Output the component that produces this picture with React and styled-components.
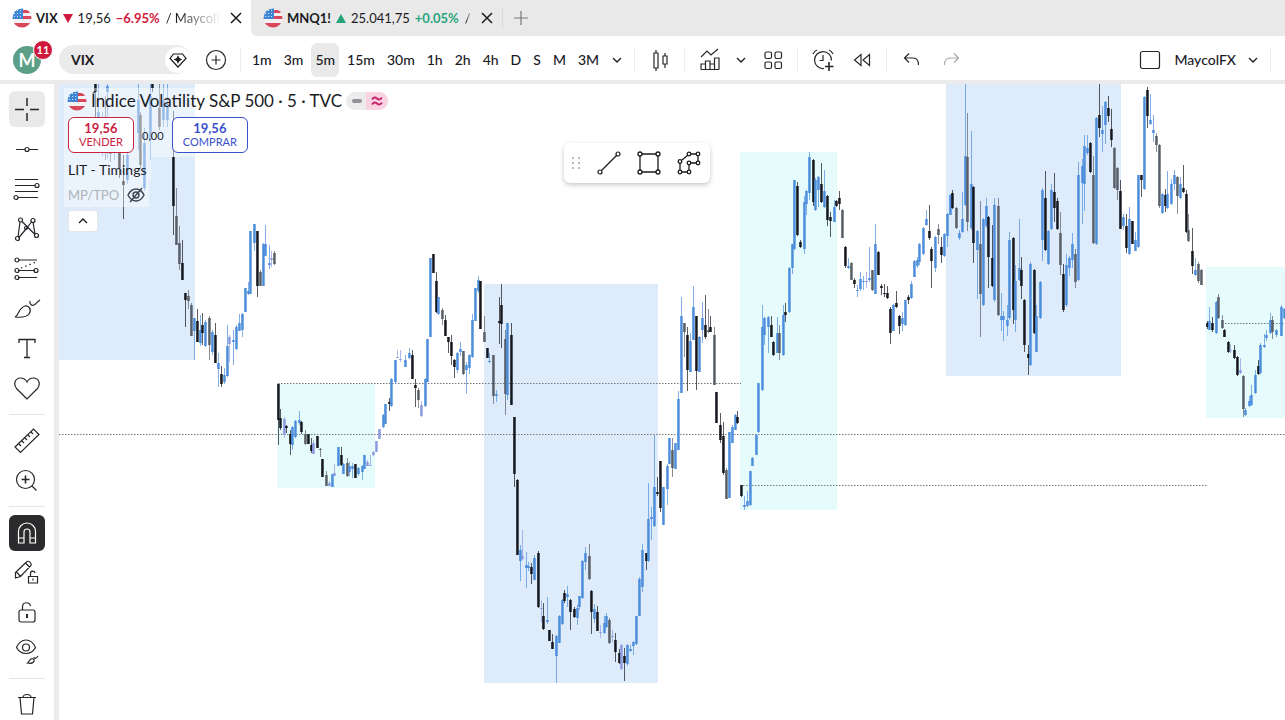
import React from "react";
import styled, { createGlobalStyle } from "styled-components";

// x, high, body top, body bottom, low, tone (k black, g grey, b blue, p violet)
const candles = `
95 84 84 92 125 k,98 84 112 118 130 b,102 112 130 140 156 b,105 96 118 132 160 g,107 84 86 92 158 b,110 124 150 154 162 g,
114 128 140 150 160 b,119 130 153 168 178 k,123 155 181 185 219 k,127 150 155 180 184 b,138 84 100 133 150 b,140 112 115 165 168 g,
144 128 143 188 191 b,150 84 96 140 160 b,152 84 84 88 92 k,159 84 108 127 130 g,163 84 100 120 127 b,167 84 104 120 127 b,
173 111 157 206 235 k,176 188 216 245 245 g,179 226 243 264 270 g,182 240 263 280 280 k,185 293 293 300 327 k,188 290 296 301 309 g,
191 303 305 336 336 g,194 318 318 331 360 b,197 309 321 342 342 k,200 315 330 343 346 b,202 313 325 333 345 k,205 320 322 346 347 b,
209 316 318 345 360 g,212 330 332 352 355 b,215 323 335 363 363 k,218 353 363 369 387 b,221 366 374 384 387 k,224 368 375 382 384 b,
227 325 346 376 377 b,229 335 337 344 362 p,233 330 340 342 365 b,236 325 327 349 350 b,239 314 323 331 331 b,242 313 314 330 337 b,
245 288 288 312 312 b,248 282 291 294 295 b,250 231 231 294 294 b,254 224 224 243 251 b,257 231 231 286 297 k,260 270 272 286 286 g,
263 243 244 286 286 b,265 225 244 256 256 b,269 245 263 265 269 b,271 251 258 260 267 p,274 251 253 264 265 g,
278 384 384 420 445 k,280 409 418 428 430 k,284 417 419 435 438 p,286 425 426 428 433 k,290 430 434 444 455 k,292 426 427 445 450 b,
295 420 421 437 438 b,299 411 420 423 425 b,301 421 422 432 434 k,305 430 434 444 445 g,308 434 434 444 444 k,311 438 445 451 453 k,
313 440 443 454 454 p,317 436 436 448 448 k,320 448 449 449 457 g,322 459 459 477 477 k,326 471 475 486 486 g,329 481 483 486 486 p,
332 474 474 487 487 b,334 464 473 476 476 p,338 447 447 466 466 b,341 447 455 465 466 k,343 463 464 474 474 b,347 458 463 476 477 g,
349 462 466 472 476 b,352 463 466 469 478 b,355 464 464 478 478 k,358 467 468 474 476 b,362 465 466 472 480 b,364 455 455 469 469 b,
367 460 462 466 466 p,370 455 465 466 466 p,373 451 452 455 456 p,376 441 441 452 452 p,379 429 429 439 439 p,383 414 415 427 428 b,
385 404 404 424 424 b,389 398 402 404 411 k,391 378 379 406 407 b,395 360 360 382 384 b,397 350 357 358 358 p,400 350 359 360 362 p,
405 355 360 367 367 b,409 348 353 358 359 b,412 350 355 379 379 k,415 379 385 388 407 k,418 388 390 400 408 g,421 401 405 416 417 p,
425 378 379 406 407 b,427 339 339 382 382 b,430 258 258 337 337 b,433 254 254 273 273 k,436 272 281 312 313 k,438 297 297 314 315 b,
442 308 310 319 325 g,445 315 320 336 336 k,448 337 337 342 353 k,451 335 342 356 365 k,454 359 360 367 378 k,457 352 353 370 373 b,
460 342 349 352 356 b,463 351 351 374 375 g,466 362 365 370 394 b,469 354 355 368 374 b,472 314 320 357 358 b,475 288 288 321 321 b,
478 276 280 291 293 b,480 281 281 329 329 k,484 316 332 342 342 g,487 348 348 358 358 k,489 353 361 362 363 b,
493 355 355 396 404 g,496 390 394 396 402 b,499 297 321 323 344 k,501 284 305 324 348 k,505 330 339 394 415 g,507 323 323 395 400 b,
511 323 335 405 405 k,514 417 417 474 487 k,517 479 480 555 555 k,520 545 550 561 581 b,522 530 556 559 560 p,526 552 565 568 588 b,
528 562 566 568 571 b,531 563 567 574 584 k,534 555 558 580 580 b,538 551 553 607 608 k,541 600 608 609 622 p,543 603 616 629 630 k,
547 597 620 622 624 b,549 630 630 641 641 k,552 634 642 649 649 k,556 635 636 656 683 b,559 615 616 643 643 b,562 599 600 624 625 b,
564 590 593 601 603 k,567 586 594 597 607 b,570 599 600 612 630 k,574 607 609 617 618 k,577 605 608 618 625 b,579 596 596 607 610 b,
582 560 561 598 599 b,585 547 553 562 570 b,589 544 556 579 580 g,591 590 591 612 634 k,594 604 609 619 623 b,597 606 612 631 631 k,
600 625 632 633 638 p,604 616 623 633 634 b,606 613 616 627 628 b,609 618 620 643 644 g,612 630 636 637 642 p,615 633 640 652 662 k,
619 649 653 663 664 k,621 644 645 669 670 p,624 648 656 663 681 k,627 644 645 664 666 b,630 645 649 651 652 b,633 641 642 646 655 b,
636 616 616 644 645 b,639 577 579 616 616 b,642 544 550 587 592 b,646 553 553 561 570 k,648 483 519 561 562 b,651 507 517 519 540 b,
654 435 487 526 527 b,657 477 492 494 496 k,660 461 461 508 512 k,663 487 487 525 525 b,667 464 466 489 505 b,669 438 438 464 464 b,
672 438 450 468 477 g,675 443 443 469 469 b,678 391 399 450 450 b,681 297 316 393 393 b,684 323 323 332 357 g,687 327 335 370 391 k,
690 333 341 372 372 b,693 286 307 340 340 b,696 316 316 371 390 k,699 336 337 372 372 b,702 302 318 330 343 b,705 295 325 337 339 k,
708 309 330 332 333 g,710 316 327 332 332 k,714 327 335 385 385 g,716 392 392 423 423 k,720 413 425 440 443 k,723 422 436 473 475 k,
726 468 470 499 499 g,729 432 432 498 498 b,732 425 427 443 443 b,735 414 415 430 430 b,737 411 417 423 424 k,741 485 485 496 497 k,
744 496 505 507 510 b,747 491 501 506 507 b,750 471 471 505 506 b,752 457 458 466 466 b,756 434 435 455 455 b,758 383 383 432 433 b,
762 305 327 390 391 b,764 317 318 335 345 b,768 316 317 327 353 b,771 316 325 337 337 k,773 341 342 355 356 k,777 317 333 353 353 b,
779 325 333 353 360 g,783 305 315 355 356 b,785 303 312 315 322 k,789 267 268 312 313 b,792 244 244 268 274 b,794 180 180 249 250 b,
797 182 186 235 236 k,800 240 242 247 248 k,804 196 202 249 254 b,806 190 191 204 215 b,809 152 157 193 200 b,813 159 160 202 206 k,
815 178 180 210 211 b,818 176 177 190 207 b,821 163 184 202 203 k,824 170 191 207 208 b,827 195 196 220 226 k,830 212 217 221 237 k,
834 200 207 222 222 b,836 200 201 206 207 k,839 191 198 204 210 k,842 209 210 238 238 g,845 246 247 266 268 k,848 258 266 268 269 b,
851 262 263 280 280 g,854 278 280 284 288 k,857 285 290 291 297 b,860 272 279 289 291 b,863 276 281 282 290 b,866 272 281 282 288 p,
869 247 278 280 282 b,872 270 270 290 291 g,875 224 244 294 294 b,878 251 252 275 275 k,881 284 286 288 295 k,884 284 293 294 297 k,
887 286 293 298 299 k,890 307 309 333 344 k,893 304 305 331 331 b,896 291 303 307 308 k,899 315 316 326 334 k,902 312 318 324 331 b,
905 300 300 325 326 b,908 295 297 300 304 k,911 281 284 298 299 b,914 260 261 277 277 b,917 257 260 266 268 b,919 243 244 262 265 b,
923 227 228 254 255 b,926 210 219 225 226 b,929 205 231 238 240 k,931 247 249 261 288 k,935 236 237 268 272 b,938 224 229 235 244 g,
941 237 247 255 263 k,944 233 234 256 257 b,947 213 214 236 247 b,950 194 195 215 215 b,952 190 193 208 209 k,956 207 208 228 229 g,
959 230 233 238 240 b,962 192 219 232 233 b,965 84 156 205 206 b,967 113 157 222 231 g,971 131 184 228 230 b,973 186 187 243 263 k,
977 230 231 250 299 b,980 201 244 294 337 g,983 218 219 305 306 b,986 198 206 226 228 b,988 216 217 257 288 k,992 225 258 286 287 k,
994 198 205 300 302 b,998 198 206 315 316 g,1001 293 316 320 331 b,1003 311 316 320 341 b,1007 305 320 326 336 b,1009 232 240 318 320 b,
1013 237 238 310 324 k,1015 265 281 320 332 b,1019 219 268 280 281 b,1021 257 270 286 299 k,1024 299 300 345 352 k,1028 345 354 358 375 k,
1030 262 264 365 366 b,1034 269 270 333 334 k,1036 305 316 352 352 b,1040 281 282 318 319 b,1042 188 190 240 261 b,1045 171 198 250 251 k,
1048 230 231 264 265 b,1051 184 190 229 230 b,1054 173 192 208 222 k,1057 198 201 229 230 k,1060 212 233 265 275 g,1063 264 274 310 312 k,
1066 254 265 305 307 b,1069 256 258 268 276 b,1072 233 244 260 268 b,1075 249 254 282 288 g,1078 162 175 280 281 b,1082 159 166 183 224 b,
1084 135 146 184 211 b,1087 135 148 153 155 b,1090 142 143 172 173 k,1093 156 175 243 244 g,1096 117 118 244 245 b,1099 84 115 128 137 k,
1102 106 130 134 152 b,1105 101 102 125 144 b,1108 96 108 116 122 k,1111 109 129 140 147 k,1114 147 148 188 189 g,1117 167 168 190 200 g,
1120 180 191 229 229 k,1123 214 217 226 230 b,1126 214 226 248 253 k,1129 207 219 254 255 b,1132 221 221 244 244 k,1135 232 240 251 251 b,
1138 175 175 247 248 b,1141 175 175 180 197 k,1144 96 97 189 190 b,1147 87 90 116 128 k,1150 94 120 124 125 b,1153 115 130 133 142 b,
1156 133 136 145 152 g,1159 144 145 206 208 g,1162 193 194 213 214 b,1165 189 195 206 212 k,1167 171 194 208 209 b,1171 179 184 204 205 b,
1174 170 175 184 190 b,1177 176 177 196 214 g,1180 177 184 198 199 b,1183 165 188 192 193 k,1186 190 194 232 233 k,1188 214 230 241 242 g,
1192 228 251 266 274 k,1195 258 270 275 276 b,1198 262 264 281 283 g,1201 269 270 285 285 g,1207 321 323 327 329 k,1209 307 321 330 330 b,
1212 317 323 330 332 k,1216 301 302 333 334 b,1218 294 297 318 319 g,1222 315 320 328 329 g,1224 329 330 337 337 k,1228 341 342 352 353 k,
1230 344 350 351 353 p,1234 345 350 358 359 k,1237 356 357 375 376 k,1240 358 370 373 374 p,1243 375 376 409 417 g,1245 408 410 415 416 b,
1249 396 401 406 407 b,1251 385 395 405 406 b,1255 370 375 393 394 b,1258 360 366 374 375 k,1260 343 345 373 374 b,1264 334 345 347 348 b,
1266 330 335 338 341 b,1270 313 320 333 334 b,1272 316 320 332 339 g,1276 329 330 335 337 b,1281 305 307 336 336 b,1284 308 309 318 319 b`
  .split(",")
  .map((row) => {
    const [x, high, top, bottom, low, tone] = row.trim().split(" ");
    return { x: +x, high: +high, top: +top, bottom: +bottom, low: +low, tone };
  });

const tones = { k: "#14171d", g: "#585e67", b: "#4d8edc", p: "#8b9adf" };

const zones = [
  { x: 59, y: 84, w: 136, h: 276, fill: "#deebfa" },
  { x: 277, y: 384, w: 98, h: 104, fill: "#e6fbfc" },
  { x: 484, y: 284, w: 174, h: 399, fill: "#deebfa" },
  { x: 740, y: 152, w: 97, h: 358, fill: "#e6fbfc" },
  { x: 946, y: 84, w: 175, h: 292, fill: "#deebfa" },
  { x: 1206, y: 267, w: 300, h: 151, fill: "#e6fbfc" },
];

const levels = [
  { x1: 278, x2: 741, y: 384 },
  { x1: 59, x2: 3000, y: 435 },
  { x1: 743, x2: 1207, y: 486 },
  { x1: 1222, x2: 3000, y: 324 },
];

const intervals = ["1m", "3m", "5m", "15m", "30m", "1h", "2h", "4h", "D", "S", "M", "3M"];

// Icons
const Icon = ({ children, size = 28, weight = 1.2 }) => (
  <svg
    width={size}
    height={size}
    viewBox={`0 0 ${size} ${size}`}
    fill="none"
    stroke="currentColor"
    strokeWidth={weight}
    aria-hidden="true"
  >
    {children}
  </svg>
);

const Flag = () => (
  <svg width="20" height="20" viewBox="0 0 20 20" aria-hidden="true">
    <clipPath id="round">
      <circle cx="10" cy="10" r="9.5" />
    </clipPath>
    <g clipPath="url(#round)">
      <path fill="#f3f1f3" d="M0 0h20v20H0z" />
      <path fill="#d9475a" d="M10 2h10v3H10zM10 8h10v3H10zM0 15h20v5H0z" />
      <path fill="#3f86d6" d="M0 0h11v11H0z" />
      <path stroke="#cfe3f8" strokeDasharray="1 2" d="M2 2.5h9M2 5.5h9M2 8.5h9" />
    </g>
  </svg>
);

const Chevron = ({ up }) => (
  <Icon size={12} weight={1.3}>
    <path d={up ? "M2 8l4-4 4 4" : "M2 4l4 4 4-4"} />
  </Icon>
);

const Cross = () => (
  <Icon size={14} weight={1.5}>
    <path d="M2 2l10 10M12 2L2 12" />
  </Icon>
);

const drawTools = [
  [
    {
      name: "Cross",
      active: true,
      icon: <path strokeWidth="1.5" d="M14 3v8M14 18v8M2 14.5h9M17 14.5h9" />,
    },
    {
      name: "Trend line",
      icon: (
        <>
          <path d="M3 14.5h9M16 14.5h9" />
          <circle cx="14" cy="14.5" r="2" />
        </>
      ),
    },
    {
      name: "Fibonacci",
      icon: (
        <>
          <path d="M2 4.5h23M2 10.5h20M2 16.5h23M5 22.5h20" />
          <circle cx="24" cy="10.5" r="2" />
          <circle cx="3" cy="22.5" r="2" />
        </>
      ),
    },
    {
      name: "Patterns",
      icon: (
        <>
          <path d="M5 22L7 7M9 6.500l13 13M20 7l2 12M18.500 7L13 14 5.500 23" />
          <circle cx="7.5" cy="5" r="2" />
          <circle cx="20" cy="5.5" r="2" />
          <circle cx="4.500" cy="23.500" r="2" />
          <circle cx="23.500" cy="20.500" r="2" />
          <circle cx="13" cy="13" r="1.5" />
        </>
      ),
    },
    {
      name: "Forecast",
      icon: (
        <>
          <path d="M5 5h19M5 15.5h17M5 22.5h19" />
          <path strokeDasharray="1.5 3" d="M8 13L23 7" />
          <circle cx="4" cy="5" r="2" />
          <circle cx="4" cy="15.5" r="2" />
          <circle cx="23" cy="15.5" r="2" />
          <circle cx="4" cy="22.5" r="2" />
        </>
      ),
    },
    {
      name: "Brush",
      icon: <path d="M2 22c4-1 3-9 10-11 4-1 7 4 4 8-3 4-9 3.5-14 3zM17 6c-1 3 2 5 4 4 2-1 3-3 6-5" />,
    },
    { name: "Text", icon: <path strokeWidth="1.3" d="M6 8V4.5h16V8M14 4.500v18M11 22.500h6" /> },
    {
      name: "Icons",
      icon: (
        <path d="M14 24L3.500 13.500C-.5 8 3 3 7.500 3c3 0 5.500 2 6.500 4 1-2 3.500-4 6.500-4C25 3 28.500 8 24.500 13.500z" />
      ),
    },
  ],
  [
    {
      name: "Measure",
      icon: (
        <path d="M2 20L20.500 2l5.500 5.500L7.500 25.500zM6 17l2 2M9 14l2 2M12 11l2 2M15 8l2 2M18 5l2 2" />
      ),
    },
    {
      name: "Zoom in",
      icon: (
        <>
          <circle cx="12.5" cy="12.5" r="9" />
          <path d="M19 19l4.500 4.500" />
          <path strokeWidth="1.6" d="M12.500 8.500v8M8.500 12.500h8" />
        </>
      ),
    },
  ],
  [
    {
      name: "Magnet mode",
      dark: true,
      icon: <path d="M5.500 24V12.500a8.500 8.500 0 0 1 17 0V24H17V13a3 3 0 0 0-6 0v11zM5.500 19h5.500M17 19h5.500" />,
    },
    {
      name: "Keep drawing",
      icon: (
        <>
          <path d="M2.500 13.500L14 2.500c2-1 5 2 4 4L7.500 17.500 2.500 19zM12.500 4l4.500 4.500M3.500 13l4 4.500" />
          <path d="M15.500 17.500h9V24h-9zM17.500 17v-2.500c0-3 4-3 4.500-.5M20 19.500v2" />
        </>
      ),
    },
    {
      name: "Lock drawings",
      icon: (
        <>
          <rect x="6" y="11" width="16" height="12" rx="2" />
          <path d="M9.500 11V8c0-5.500 7-5.500 8-1" />
          <path strokeWidth="2" d="M14 15v4" />
        </>
      ),
    },
    {
      name: "Hide drawings",
      icon: (
        <>
          <path d="M3.500 8.500C8-1.500 18-1.500 22.500 8.500 18 16.500 8 16.500 3.500 8.500z" />
          <circle cx="13" cy="8.500" r="3.500" />
          <path d="M14.500 24c2-1 1.500-4 4.500-4.500 2 0 3 2 1.500 3.500s-4 1.500-6 1zM21 18c0 2 2 2 4-1" />
        </>
      ),
    },
  ],
  [
    {
      name: "Remove objects",
      icon: <path d="M5 6.500h18M7 6.500l1.500 16.500h11L21 6.500M10 6.500c0-4 8-4 8 0" />,
    },
  ],
];

const App = () => {
  return (
    <Page>
      <GlobalStyle />
      <TabBar>
        <Tab $active href="#vix">
          <Flag />
          <strong>VIX</strong>
          <Arrow $down />
          <span>19,56</span>
          <Change $down>−6.95%</Change>
          <Trailing>/ MaycolFX</Trailing>
        </Tab>
        <TabClose aria-label="Close VIX">
          <Cross />
        </TabClose>
        <TabRest>
          <Tab href="#mnq">
            <Flag />
            <strong>MNQ1!</strong>
            <Arrow />
            <span>25.041,75</span>
            <Change>+0.05%</Change>
            <Trailing>/</Trailing>
          </Tab>
          <TabClose aria-label="Close MNQ1!">
            <Cross />
          </TabClose>
          <NewTab aria-label="New tab">
            <Icon size={14}>
              <path d="M7 0v14M0 7h14" />
            </Icon>
          </NewTab>
        </TabRest>
      </TabBar>

      <Toolbar>
        <Avatar aria-label="Account">
          M<Badge>11</Badge>
        </Avatar>
        <Search>
          <input aria-label="Symbol" defaultValue="VIX" />
          <button aria-label="Symbol details">
            <Icon size={20}>
              <path d="M5.500 4h9L18 8.500 10 17 2 8.500z" />
              <path fill="currentColor" d="M10 6.500l1 2 2 1-2 1-1 2-1-2-2-1 2-1z" />
            </Icon>
          </button>
        </Search>
        <IconButton aria-label="Compare">
          <Icon size={22}>
            <circle cx="11" cy="11" r="9.5" />
            <path d="M11 6.500v9M6.500 11h9" />
          </Icon>
        </IconButton>
        <Separator />
        {intervals.map((label) => (
          <Interval key={label} $active={label === "5m"}>
            {label}
          </Interval>
        ))}
        <MenuButton aria-label="More intervals">
          <Chevron />
        </MenuButton>
        <Separator />
        <IconButton aria-label="Candles">
          <Icon>
            <path d="M8 7h4v15H8zM10 4v3M10 22v3M17 10h4v8h-4zM19 7v3M19 18v4" />
          </Icon>
        </IconButton>
        <Separator />
        <IconButton aria-label="Indicators">
          <Icon>
            <path d="M5 11l6-6 4 4 7-6M5 23.500V18h4.500v5.500M9.500 18v-3H14v8.500M14 18h4.500M18.500 23.500V12H23v11.500M5 23.500h18" />
          </Icon>
        </IconButton>
        <MenuButton aria-label="Favorite indicators">
          <Chevron />
        </MenuButton>
        <IconButton aria-label="Layouts">
          <Icon>
            <rect x="6" y="6" width="6.5" height="6.5" rx="1.5" />
            <rect x="16" y="6" width="6.5" height="6.5" rx="1.5" />
            <rect x="6" y="16" width="6.5" height="6.5" rx="1.5" />
            <rect x="16" y="16" width="6.5" height="6.5" rx="1.5" />
          </Icon>
        </IconButton>
        <Separator />
        <IconButton aria-label="Create alert">
          <Icon>
            <path d="M15 22.500a8.500 8.500 0 1 1 7.500-8M14 9v5.500h-3.500M4 8c1-2 2-3.500 4-4M24 8c-1-2-2-3.500-4-4" />
            <path strokeWidth="1.6" d="M20 16v9M16 20.500h8.500" />
          </Icon>
        </IconButton>
        <IconButton aria-label="Replay">
          <Icon>
            <path d="M13 8.500v11L6.500 14zM21.500 8.500v11L15 14z" />
          </Icon>
        </IconButton>
        <Separator />
        <IconButton aria-label="Undo">
          <Icon>
            <path d="M11 7.500L6.500 12l4.500 4.500M6.500 12H15c3.500 0 5.500 2.500 5.500 7" />
          </Icon>
        </IconButton>
        <IconButton $muted aria-label="Redo">
          <Icon>
            <path d="M17 7.500l4.500 4.500-4.500 4.500M21.500 12H13c-3.500 0-5.500 2.500-5.500 7" />
          </Icon>
        </IconButton>
        <LayoutTools>
          <IconButton aria-label="Layout setup">
            <Icon>
              <rect x="4.500" y="5.500" width="19" height="17" rx="2" />
            </Icon>
          </IconButton>
          <LayoutName>MaycolFX</LayoutName>
          <MenuButton aria-label="Manage layouts">
            <Chevron />
          </MenuButton>
          <Separator />
        </LayoutTools>
      </Toolbar>

      <Workspace>
        <Sidebar>
          {drawTools.map((group, index) => (
            <ToolGroup key={index}>
              {group.map((tool) => (
                <ToolButton
                  key={tool.name}
                  $active={tool.active}
                  $dark={tool.dark}
                  aria-label={tool.name}
                >
                  <Icon>{tool.icon}</Icon>
                </ToolButton>
              ))}
            </ToolGroup>
          ))}
        </Sidebar>

        <ChartArea>
          <Plot role="img" aria-label="VIX candlestick chart">
            <g transform="translate(-59 -84)">
              {zones.map((zone) => (
                <rect
                  key={zone.x}
                  x={zone.x}
                  y={zone.y}
                  width={zone.w}
                  height={zone.h}
                  fill={zone.fill}
                />
              ))}
              {levels.map((level) => (
                <path
                  key={level.y}
                  d={`M${level.x1} ${level.y - 0.5}H${level.x2}`}
                  stroke="#73787d"
                  strokeDasharray="1.5 1.5"
                />
              ))}
              {candles.map((c) => (
                <g key={c.x} fill={tones[c.tone]}>
                  <rect x={c.x} y={c.high} width="1" height={c.low - c.high} opacity="0.7" />
                  <rect
                    x={c.x - 0.8}
                    y={c.top}
                    width="2.5"
                    height={Math.max(c.bottom - c.top, 1)}
                  />
                </g>
              ))}
            </g>
          </Plot>

          <Legend>
            <TitleRow>
              <Flag />
              <h1>Índice Volatility S&amp;P 500 · 5 · TVC</h1>
              <Status>
                <i />
                <span>
                  <Icon size={12} weight={1.8}>
                    <path d="M1 4.500c2-3 4-2 5-1s3 2 5-1M1 9.500c2-3 4-2 5-1s3 2 5-1" />
                  </Icon>
                </span>
              </Status>
            </TitleRow>
            <Quotes>
              <Quote $color="#c9213f">
                <strong>19,56</strong>
                VENDER
              </Quote>
              <Spread>0,00</Spread>
              <Quote $color="#3a4fcb">
                <strong>19,56</strong>
                COMPRAR
              </Quote>
            </Quotes>
            <Study>LIT - Timings</Study>
            <Study $muted>
              MP/TPO
              <Icon size={18} weight={1.4}>
                <path d="M1 9c4-8 12-8 16 0-4 8-12 8-16 0zM3 16L15 2" />
                <circle cx="9" cy="9" r="3" />
              </Icon>
            </Study>
            <Collapse aria-label="Collapse legend">
              <Chevron up />
            </Collapse>
          </Legend>

          <Favorites>
            <Icon size={14} weight={0}>
              <g fill="#b9babd">
                {[1, 6, 11].map((y) => (
                  <React.Fragment key={y}>
                    <rect x="3" y={y} width="2" height="2" />
                    <rect x="9" y={y} width="2" height="2" />
                  </React.Fragment>
                ))}
              </g>
            </Icon>
            <button aria-label="Trend line">
              <Icon>
                <path d="M6.500 21.500l15-15" />
                <circle cx="5" cy="23" r="2" />
                <circle cx="23" cy="5" r="2" />
              </Icon>
            </button>
            <button aria-label="Rectangle">
              <Icon weight={1.3}>
                <path d="M7 5h14M7 23h14M5 7v14M23 7v14" />
                <circle cx="5" cy="5" r="2" />
                <circle cx="23" cy="5" r="2" />
                <circle cx="5" cy="23" r="2" />
                <circle cx="23" cy="23" r="2" />
              </Icon>
            </button>
            <button aria-label="Path">
              <Icon weight={1.3}>
                <path d="M7 11l6-5M16 5h5M23 7v5M21 14h-5M14 16v5M12 23H7M5 21v-7" />
                <circle cx="5" cy="12.5" r="1.8" />
                <circle cx="14" cy="5" r="1.8" />
                <circle cx="23" cy="5" r="1.8" />
                <circle cx="23" cy="14" r="1.8" />
                <circle cx="14" cy="14" r="1.8" />
                <circle cx="14" cy="23" r="1.8" />
                <circle cx="5" cy="23" r="1.8" />
              </Icon>
            </button>
          </Favorites>
        </ChartArea>
      </Workspace>
    </Page>
  );
};

// Styles
const GlobalStyle = createGlobalStyle`
  * {
    box-sizing: border-box;
  }
  body {
    margin: 0;
    font-family: Lato, "Open Sans", sans-serif;
    font-size: 14px;
    color: #1a1b1f;
    background: #fff;
  }
  button, input {
    font: inherit;
    color: inherit;
    border: 0;
    padding: 0;
    background: none;
  }
  svg {
    display: block;
    flex-shrink: 0;
  }
`;

const Page = styled.div`
  display: flex;
  flex-direction: column;
  height: 100vh;
  overflow: hidden;
`;

const TabBar = styled.nav`
  display: flex;
  height: 36px;
  flex-shrink: 0;
  font-size: 13px;
`;

const Tab = styled.a`
  display: flex;
  align-items: center;
  width: 221px;
  padding-left: 12px;
  overflow: hidden;
  white-space: nowrap;
  color: inherit;
  text-decoration: none;

  strong {
    margin-left: 4px;
    font-weight: 700;
  }
`;

const Arrow = styled.i`
  margin: 0 5px;
  border: 5px solid transparent;
  border-width: ${({ $down }) => ($down ? "9px 5px 0" : "0 5px 9px")};
  border-top-color: ${({ $down }) => ($down ? "#d0183c" : "transparent")};
  border-bottom-color: ${({ $down }) => ($down ? "transparent" : "#23a376")};
`;

const Change = styled.span`
  margin: 0 6px 0 5px;
  font-weight: 700;
  color: ${({ $down }) => ($down ? "#d0183c" : "#2aa57c")};
`;

const Trailing = styled.span`
  flex: 1;
  overflow: hidden;
  mask-image: linear-gradient(90deg, #000 20%, transparent);
`;

const TabClose = styled.button`
  display: grid;
  place-items: center;
  width: 30px;
`;

const TabRest = styled.div`
  display: flex;
  flex: 1;
  background: #e9e9e9;
  border-bottom-left-radius: 6px;
`;

const NewTab = styled.button`
  display: grid;
  place-items: center;
  width: 36px;
  margin: 8px 0;
  color: #77787b;
  border-left: 1px solid #dadada;
`;

const Toolbar = styled.header`
  display: flex;
  align-items: center;
  height: 48px;
  flex-shrink: 0;
  padding: 3px 9px 0 13px;
  background: #fff;
  border-bottom: 4px solid #ebebeb;
  font-weight: 500;
`;

const Avatar = styled.button`
  position: relative;
  width: 28px;
  height: 28px;
  flex-shrink: 0;
  border-radius: 50%;
  background: #5c9f87;
  color: #fff;
  font-size: 18px;
  font-weight: 700;
`;

const Badge = styled.span`
  position: absolute;
  top: -6px;
  right: -12px;
  width: 20px;
  height: 20px;
  border: 1px solid #fff;
  border-radius: 50%;
  background: #d0183c;
  font-size: 11px;
  line-height: 18px;
`;

const Search = styled.div`
  display: flex;
  align-items: center;
  width: 132px;
  height: 29px;
  flex-shrink: 0;
  margin: 0 5px 0 18px;
  padding: 0 1px 0 12px;
  border-radius: 15px;
  background: #ebebeb;

  input {
    width: 94px;
    font-weight: 700;
  }
  button {
    display: grid;
    place-items: center;
    width: 26px;
    height: 26px;
    flex-shrink: 0;
    border-radius: 50%;
    background: #fff;
  }
`;

const IconButton = styled.button`
  display: grid;
  place-items: center;
  width: 39px;
  height: 34px;
  flex-shrink: 0;
  color: ${({ $muted }) => ($muted ? "#a8a9ac" : "#25262a")};
`;

const Separator = styled.i`
  width: 1px;
  height: 26px;
  margin: 0 5px;
  background: #ededed;
`;

const Interval = styled.button`
  height: 34px;
  margin: 0 2px;
  padding: 0 4px;
  border-radius: 6px;
  background: ${({ $active }) => ($active ? "#e9e9e9" : "none")};
`;

const MenuButton = styled.button`
  display: grid;
  place-items: center;
  width: 24px;
  height: 34px;
  flex-shrink: 0;
`;

const LayoutTools = styled.div`
  display: flex;
  align-items: center;
  margin-left: auto;
`;

const LayoutName = styled.button`
  margin: 0 5px;
`;

const Workspace = styled.main`
  display: flex;
  flex: 1;
  min-height: 0;
`;

const Sidebar = styled.aside`
  width: 59px;
  flex-shrink: 0;
  padding: 7px 9px 0;
  overflow: hidden;
  border-right: 5px solid #ebebeb;
`;

const ToolGroup = styled.div`
  display: flex;
  flex-direction: column;
  gap: 4px;

  & + & {
    margin-top: 7px;
    padding-top: 8px;
    border-top: 1px solid #e6e6e6;
  }
`;

const ToolButton = styled.button`
  display: grid;
  place-items: center;
  width: 36px;
  height: 36px;
  border-radius: 6px;
  color: ${({ $dark }) => ($dark ? "#fff" : "#25262a")};
  background: ${({ $active, $dark }) => ($dark ? "#2b2b2d" : $active ? "#e9e9e9" : "none")};
`;

const ChartArea = styled.section`
  position: relative;
  flex: 1;
  min-width: 0;
`;

const Plot = styled.svg`
  width: 100%;
  height: 100%;
`;

const Legend = styled.div`
  position: absolute;
  top: 4px;
  left: 5px;
  display: flex;
  flex-direction: column;
  align-items: flex-start;
`;

const TitleRow = styled.div`
  display: flex;
  align-items: center;
  height: 28px;
  padding: 0 3px 2px;
  background: rgba(255, 255, 255, 0.4);

  h1 {
    margin: 0 4px;
    font-size: 17px;
    font-weight: 400;
    line-height: 24px;
  }
`;

const Status = styled.div`
  display: flex;
  align-items: center;
  height: 18px;
  overflow: hidden;
  border-radius: 9px;
  background: #ececec;

  i {
    width: 10px;
    height: 4px;
    margin: 0 4px 0 6px;
    border-radius: 2px;
    background: #919397;
  }
  span {
    padding: 3px 5px;
    background: #f9d3e2;
    color: #c0286a;
  }
`;

const Quotes = styled.div`
  display: flex;
  align-items: center;
  height: 41px;
  padding: 0 4px 3px;
  background: rgba(255, 255, 255, 0.4);
`;

const Quote = styled.button`
  height: 36px;
  padding: 0 10px;
  border: 1px solid ${({ $color }) => $color};
  border-radius: 6px;
  background: #fff;
  color: ${({ $color }) => $color};
  font-size: 11px;
  line-height: 14px;

  strong {
    display: block;
    font-size: 13px;
  }
`;

const Spread = styled.span`
  width: 38px;
  font-size: 11px;
  text-align: center;
`;

const Study = styled.div`
  display: flex;
  align-items: center;
  gap: 8px;
  height: 25px;
  padding: 0 4px;
  background: rgba(255, 255, 255, 0.4);
  color: ${({ $muted }) => ($muted ? "#aeb3ba" : "#1a1b1f")};
  font-size: ${({ $muted }) => ($muted ? "13px" : "14px")};

  svg {
    color: #3b4350;
  }
`;

const Collapse = styled.button`
  display: grid;
  place-items: center;
  width: 30px;
  height: 22px;
  margin: 3px 0 0 4px;
  border: 1px solid #e4e6ea;
  border-radius: 3px;
  background: #fff;
`;

const Favorites = styled.div`
  position: absolute;
  top: 59px;
  left: 505px;
  display: flex;
  align-items: center;
  gap: 12px;
  height: 40px;
  padding: 0 7px 0 5px;
  border-radius: 6px;
  background: #fff;
  box-shadow: 0 2px 5px rgba(0, 0, 0, 0.22);
`;

export default App;
